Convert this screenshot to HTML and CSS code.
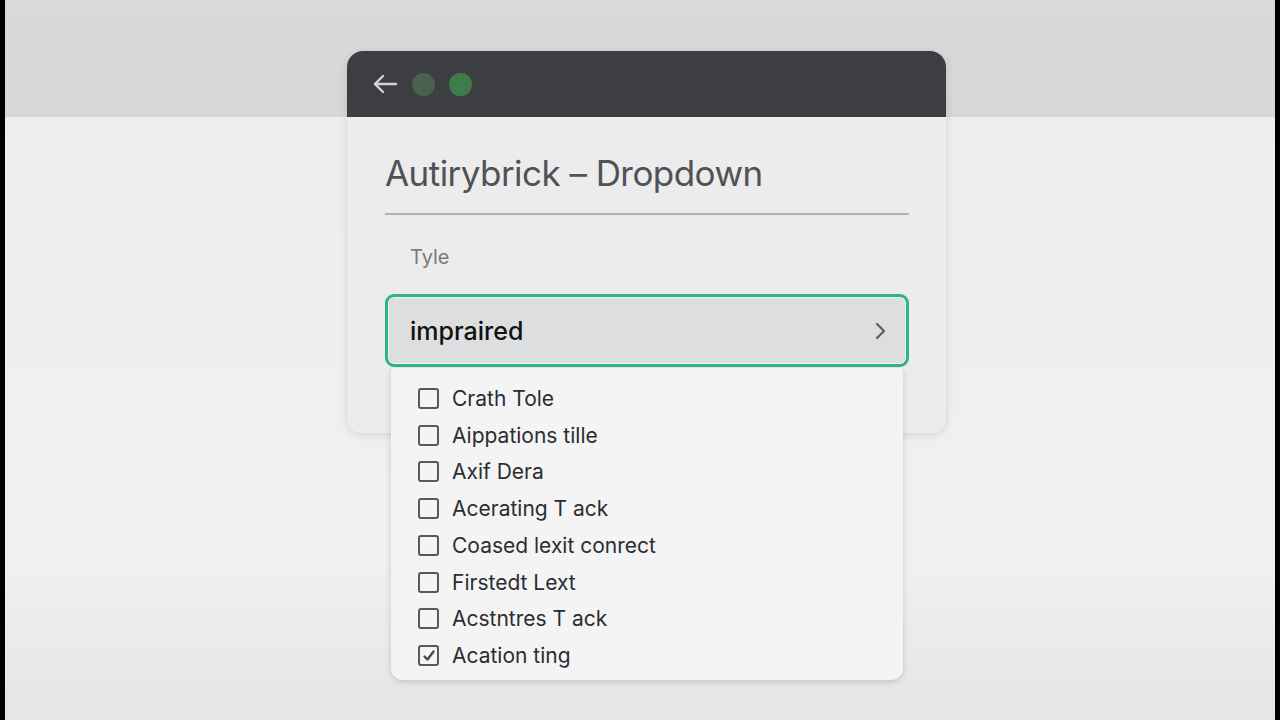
FILE: index.html
```
<!DOCTYPE html>
<html lang="en">
  <head>
    <meta charset="UTF-8" />
    <meta name="viewport" content="width=device-width, initial-scale=1.0" />
    <title>Autirybrick – Dropdown</title>
    <link rel="stylesheet" href="styles.css">
  </head>
  <body>
    <div class="screen">
      <div class="window">
        <div class="window-bar">
          <svg class="back" width="26" height="22" viewBox="0 0 26 22">
            <path d="M24 11H3M11 3L3 11l8 8" fill="none" stroke="#d4d5d7" stroke-width="2.4" stroke-linecap="round" stroke-linejoin="round"/>
          </svg>
          <span class="dot dot-dim"></span>
          <span class="dot dot-green"></span>
        </div>
        <div class="window-body">
          <h1 class="title">Autirybrick – Dropdown</h1>
          <hr class="divider" />
          <div class="label">Tyle</div>
          <div class="select-wrap">
            <div class="select">
              <span>impraired</span>
              <svg width="14" height="20" viewBox="0 0 14 20">
                <path d="M4 3l7 7-7 7" fill="none" stroke="#606266" stroke-width="2.4" stroke-linecap="round" stroke-linejoin="round"/>
              </svg>
            </div>
            <ul class="options">
              <li><span class="box"></span>Crath Tole</li>
              <li><span class="box"></span>Aippations tille</li>
              <li><span class="box"></span>Axif Dera</li>
              <li><span class="box"></span>Acerating T ack</li>
              <li><span class="box"></span>Coased lexit conrect</li>
              <li><span class="box"></span>Firstedt Lext</li>
              <li><span class="box"></span>Acstntres T ack</li>
              <li>
                <span class="box">
                  <svg width="14" height="14" viewBox="0 0 14 14">
                    <path d="M2.5 7.5l3 3 6-8" fill="none" stroke="#45474b" stroke-width="2.3" stroke-linecap="round" stroke-linejoin="round"/>
                  </svg>
                </span>Acation ting
              </li>
            </ul>
          </div>
        </div>
      </div>
    </div>
  </body>
</html>
```

FILE: styles.css
```
body {
  margin: 0;
  background-color: #000;
  font-family: Inter, "Liberation Sans", Arial, sans-serif;
}

.screen {
  margin: 0 5px;
  height: 720px;
  background: linear-gradient(#d9d9d9 0, #d6d7d7 117px, #eeeeee 117px, #f0f0f0 560px, #e4e5e5 720px);
  padding-top: 51px;
  padding-left: 342px;
  box-sizing: border-box;
}

.window {
  width: 599px;
  border-radius: 16px;
  box-shadow: 0 2px 8px rgba(0, 0, 0, 0.12);
}

.window-bar {
  height: 66px;
  background-color: #3d3e42;
  border-radius: 16px 16px 0 0;
  display: flex;
  align-items: center;
  padding-left: 25px;
  box-sizing: border-box;
}

.back {
  margin-right: 14px;
}

.dot {
  width: 23px;
  height: 23px;
  border-radius: 50%;
  margin-right: 14px;
}

.dot-dim {
  background-color: #4a624d;
}

.dot-green {
  background-color: #3f7c4b;
}

.window-body {
  background-color: #ececec;
  border-radius: 0 0 14px 14px;
  padding: 34px 37px 66px 38px;
}

.title {
  margin: 0;
  font-size: 35px;
  line-height: 44px;
  font-weight: 400;
  color: #505256;
  letter-spacing: -0.55px;
}

.divider {
  margin: 18px 0 0;
  border: none;
  border-top: 2px solid #b0b1b3;
}

.label {
  margin-top: 30px;
  padding-left: 25px;
  font-size: 20px;
  line-height: 24px;
  color: #7a7b7e;
}

.select-wrap {
  position: relative;
  margin-top: 25px;
}

.select {
  height: 73px;
  box-sizing: border-box;
  border: 3px solid #2db680;
  border-radius: 9px;
  background-color: #dcdedf;
  display: flex;
  align-items: center;
  justify-content: space-between;
  padding: 0 19px 0 22px;
  font-size: 25px;
  font-weight: 500;
  color: #111;
  box-shadow: 0 0 0 1px rgba(255, 255, 255, 0.6) inset;
}

.options {
  position: absolute;
  top: 74px;
  left: 6px;
  right: 6px;
  margin: 0;
  padding: 12px 0 6px 27px;
  list-style-type: none;
  background-color: #f4f4f4;
  border-radius: 4px 4px 12px 12px;
  box-shadow: 0 2px 6px rgba(0, 0, 0, 0.16);
}

.options li {
  display: flex;
  align-items: center;
  height: 36.75px;
  font-size: 21px;
  color: #2b2d31;
}

.box {
  width: 17px;
  height: 17px;
  border: 2px solid #58595d;
  border-radius: 3px;
  margin-right: 13px;
  display: flex;
  align-items: center;
  justify-content: center;
  flex-shrink: 0;
}
```
